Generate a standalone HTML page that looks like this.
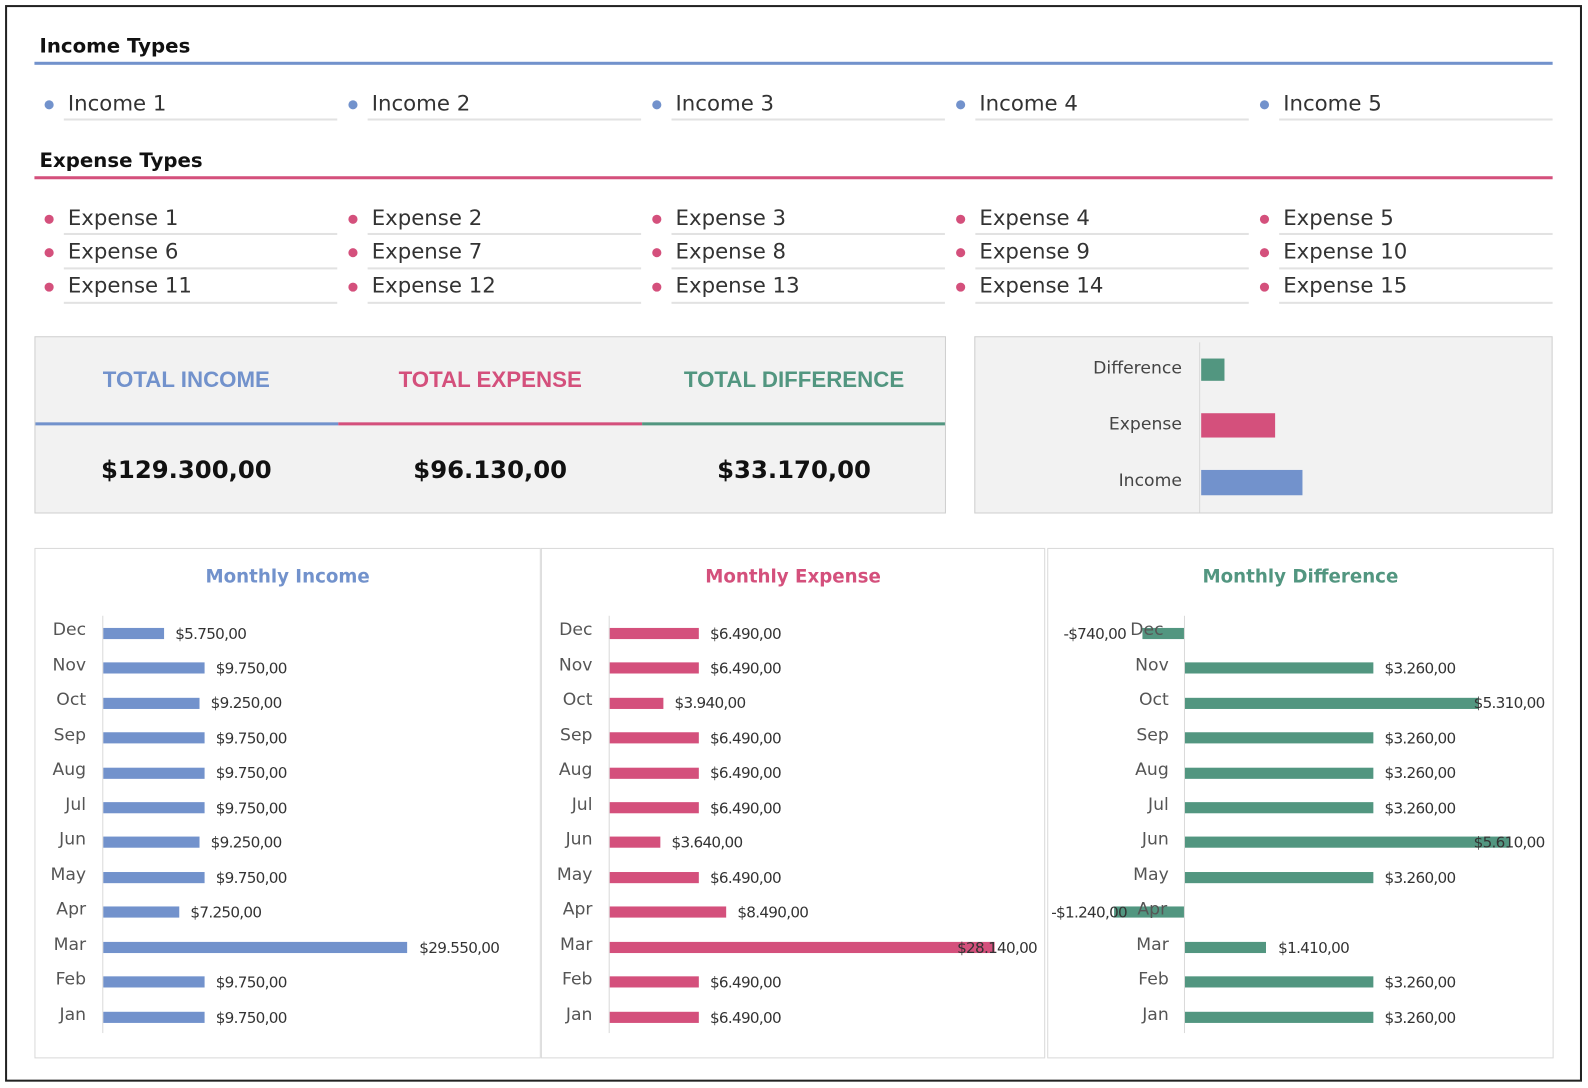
<!DOCTYPE html>
<html><head><meta charset="utf-8"><style>
*{margin:0;padding:0;box-sizing:border-box}
html,body{width:1588px;height:1088px;overflow:hidden;background:#fff}
#w{position:absolute;left:0;top:0;width:1568px;height:1074px;transform:scale(1.0128);transform-origin:0 0;font-family:"DejaVu Sans",sans-serif;color:#333}
.a{position:absolute}
.frame{left:5px;top:5px;width:1557px;height:1063px;border:2px solid #222}
.h{font-weight:bold;font-size:19.5px;color:#111;left:39px;line-height:24px}
.ln{left:34px;width:1499px;height:3px}
.it{font-size:21px;color:#333;line-height:24px;white-space:nowrap}
.ul{height:2px;background:#e2e2e2;width:270px}
.dot{width:9px;height:9px;border-radius:50%}
.bl{background:#7292cc}.pk{background:#d4507c}.gr{background:#529680}
.box{background:#f2f2f2;border:1.5px solid #cfcfcf}
.th{font-family:"Liberation Sans",sans-serif;font-weight:bold;font-size:22px;width:300px;text-align:center;line-height:26px}
.tv{font-weight:bold;font-size:24px;color:#111;width:300px;text-align:center;line-height:30px}
.cl{font-size:17px;color:#444;width:150px;text-align:right;line-height:20px}
.pn{border:1.5px solid #d9d9d9;background:#fff}
.pt{font-weight:bold;font-size:18px;text-align:center;line-height:24px}
.ax{width:1px;background:#d9d9d9}
.m{font-size:17px;color:#555;width:60px;text-align:right;line-height:20px}
.v{font-size:15px;color:#333;letter-spacing:-0.7px;line-height:20px;white-space:nowrap}
.b{height:11px}
</style></head><body><div id="w">
<div class="a frame"></div>

<div class="a h" style="top:34px">Income Types</div>
<div class="a ln bl" style="top:61px"></div>
<div class="a dot bl" style="left:44px;top:99px"></div><div class="a it" style="left:67px;top:90px">Income 1</div><div class="a ul" style="left:63px;top:117px"></div>
<div class="a dot bl" style="left:344px;top:99px"></div><div class="a it" style="left:367px;top:90px">Income 2</div><div class="a ul" style="left:363px;top:117px"></div>
<div class="a dot bl" style="left:644px;top:99px"></div><div class="a it" style="left:667px;top:90px">Income 3</div><div class="a ul" style="left:663px;top:117px"></div>
<div class="a dot bl" style="left:944px;top:99px"></div><div class="a it" style="left:967px;top:90px">Income 4</div><div class="a ul" style="left:963px;top:117px"></div>
<div class="a dot bl" style="left:1244px;top:99px"></div><div class="a it" style="left:1267px;top:90px">Income 5</div><div class="a ul" style="left:1263px;top:117px"></div>

<div class="a h" style="top:147px">Expense Types</div>
<div class="a ln pk" style="top:174px"></div>

<div class="a dot pk" style="left:44px;top:212px"></div><div class="a it" style="left:67px;top:203px">Expense 1</div><div class="a ul" style="left:63px;top:230px"></div>
<div class="a dot pk" style="left:344px;top:212px"></div><div class="a it" style="left:367px;top:203px">Expense 2</div><div class="a ul" style="left:363px;top:230px"></div>
<div class="a dot pk" style="left:644px;top:212px"></div><div class="a it" style="left:667px;top:203px">Expense 3</div><div class="a ul" style="left:663px;top:230px"></div>
<div class="a dot pk" style="left:944px;top:212px"></div><div class="a it" style="left:967px;top:203px">Expense 4</div><div class="a ul" style="left:963px;top:230px"></div>
<div class="a dot pk" style="left:1244px;top:212px"></div><div class="a it" style="left:1267px;top:203px">Expense 5</div><div class="a ul" style="left:1263px;top:230px"></div>

<div class="a dot pk" style="left:44px;top:245px"></div><div class="a it" style="left:67px;top:236px">Expense 6</div><div class="a ul" style="left:63px;top:264px"></div>
<div class="a dot pk" style="left:344px;top:245px"></div><div class="a it" style="left:367px;top:236px">Expense 7</div><div class="a ul" style="left:363px;top:264px"></div>
<div class="a dot pk" style="left:644px;top:245px"></div><div class="a it" style="left:667px;top:236px">Expense 8</div><div class="a ul" style="left:663px;top:264px"></div>
<div class="a dot pk" style="left:944px;top:245px"></div><div class="a it" style="left:967px;top:236px">Expense 9</div><div class="a ul" style="left:963px;top:264px"></div>
<div class="a dot pk" style="left:1244px;top:245px"></div><div class="a it" style="left:1267px;top:236px">Expense 10</div><div class="a ul" style="left:1263px;top:264px"></div>

<div class="a dot pk" style="left:44px;top:279px"></div><div class="a it" style="left:67px;top:270px">Expense 11</div><div class="a ul" style="left:63px;top:298px"></div>
<div class="a dot pk" style="left:344px;top:279px"></div><div class="a it" style="left:367px;top:270px">Expense 12</div><div class="a ul" style="left:363px;top:298px"></div>
<div class="a dot pk" style="left:644px;top:279px"></div><div class="a it" style="left:667px;top:270px">Expense 13</div><div class="a ul" style="left:663px;top:298px"></div>
<div class="a dot pk" style="left:944px;top:279px"></div><div class="a it" style="left:967px;top:270px">Expense 14</div><div class="a ul" style="left:963px;top:298px"></div>
<div class="a dot pk" style="left:1244px;top:279px"></div><div class="a it" style="left:1267px;top:270px">Expense 15</div><div class="a ul" style="left:1263px;top:298px"></div>

<!-- summary -->
<div class="a box" style="left:34px;top:332px;width:900px;height:175px"></div>
<div class="a th" style="left:34px;top:362px;color:#7292cc">TOTAL INCOME</div>
<div class="a th" style="left:334px;top:362px;color:#d4507c">TOTAL EXPENSE</div>
<div class="a th" style="left:634px;top:362px;color:#529680">TOTAL DIFFERENCE</div>
<div class="a bl" style="left:35px;top:417px;width:299px;height:3px"></div>
<div class="a pk" style="left:334px;top:417px;width:300px;height:3px"></div>
<div class="a gr" style="left:634px;top:417px;width:299px;height:3px"></div>
<div class="a tv" style="left:34px;top:449px">$129.300,00</div>
<div class="a tv" style="left:334px;top:449px">$96.130,00</div>
<div class="a tv" style="left:634px;top:449px">$33.170,00</div>

<!-- small chart -->
<div class="a box" style="left:962px;top:332px;width:571px;height:175px"></div>
<div class="a ax" style="left:1184px;top:338px;height:168px"></div>
<div class="a cl" style="left:1017px;top:354px">Difference</div>
<div class="a cl" style="left:1017px;top:409px">Expense</div>
<div class="a cl" style="left:1017px;top:465px">Income</div>
<div class="a gr" style="left:1186px;top:354px;width:23px;height:22px"></div>
<div class="a pk" style="left:1186px;top:408px;width:73px;height:24px"></div>
<div class="a bl" style="left:1186px;top:464px;width:100px;height:25px"></div>

<!-- panels -->
<div class="a pn" style="left:34px;top:541px;width:500px;height:504px"></div>
<div class="a pn" style="left:534px;top:541px;width:498px;height:504px"></div>
<div class="a pn" style="left:1034px;top:541px;width:500px;height:504px"></div>
<div class="a pt" style="left:34px;top:558px;width:500px;color:#7292cc">Monthly Income</div>
<div class="a pt" style="left:534px;top:558px;width:498px;color:#d4507c">Monthly Expense</div>
<div class="a pt" style="left:1034px;top:558px;width:500px;color:#529680">Monthly Difference</div>

<div class="a ax" style="left:101px;top:608px;height:412px"></div>
<div class="a ax" style="left:601px;top:608px;height:412px"></div>
<div class="a ax" style="left:1169px;top:608px;height:412px"></div>

<!-- income panel -->
<div class="a m" style="left:25px;top:612px">Dec</div><div class="a b bl" style="left:102px;top:620px;width:60px"></div><div class="a v" style="left:173px;top:616px">$5.750,00</div>
<div class="a m" style="left:25px;top:647px">Nov</div><div class="a b bl" style="left:102px;top:654px;width:100px"></div><div class="a v" style="left:213px;top:650px">$9.750,00</div>
<div class="a m" style="left:25px;top:681px">Oct</div><div class="a b bl" style="left:102px;top:689px;width:95px"></div><div class="a v" style="left:208px;top:684px">$9.250,00</div>
<div class="a m" style="left:25px;top:716px">Sep</div><div class="a b bl" style="left:102px;top:723px;width:100px"></div><div class="a v" style="left:213px;top:719px">$9.750,00</div>
<div class="a m" style="left:25px;top:750px">Aug</div><div class="a b bl" style="left:102px;top:758px;width:100px"></div><div class="a v" style="left:213px;top:753px">$9.750,00</div>
<div class="a m" style="left:25px;top:785px">Jul</div><div class="a b bl" style="left:102px;top:792px;width:100px"></div><div class="a v" style="left:213px;top:788px">$9.750,00</div>
<div class="a m" style="left:25px;top:819px">Jun</div><div class="a b bl" style="left:102px;top:826px;width:95px"></div><div class="a v" style="left:208px;top:822px">$9.250,00</div>
<div class="a m" style="left:25px;top:854px">May</div><div class="a b bl" style="left:102px;top:861px;width:100px"></div><div class="a v" style="left:213px;top:857px">$9.750,00</div>
<div class="a m" style="left:25px;top:888px">Apr</div><div class="a b bl" style="left:102px;top:895px;width:75px"></div><div class="a v" style="left:188px;top:891px">$7.250,00</div>
<div class="a m" style="left:25px;top:923px">Mar</div><div class="a b bl" style="left:102px;top:930px;width:300px"></div><div class="a v" style="left:414px;top:926px">$29.550,00</div>
<div class="a m" style="left:25px;top:957px">Feb</div><div class="a b bl" style="left:102px;top:964px;width:100px"></div><div class="a v" style="left:213px;top:960px">$9.750,00</div>
<div class="a m" style="left:25px;top:992px">Jan</div><div class="a b bl" style="left:102px;top:999px;width:100px"></div><div class="a v" style="left:213px;top:995px">$9.750,00</div>

<!-- expense panel -->
<div class="a m" style="left:525px;top:612px">Dec</div><div class="a b pk" style="left:602px;top:620px;width:88px"></div><div class="a v" style="left:701px;top:616px">$6.490,00</div>
<div class="a m" style="left:525px;top:647px">Nov</div><div class="a b pk" style="left:602px;top:654px;width:88px"></div><div class="a v" style="left:701px;top:650px">$6.490,00</div>
<div class="a m" style="left:525px;top:681px">Oct</div><div class="a b pk" style="left:602px;top:689px;width:53px"></div><div class="a v" style="left:666px;top:684px">$3.940,00</div>
<div class="a m" style="left:525px;top:716px">Sep</div><div class="a b pk" style="left:602px;top:723px;width:88px"></div><div class="a v" style="left:701px;top:719px">$6.490,00</div>
<div class="a m" style="left:525px;top:750px">Aug</div><div class="a b pk" style="left:602px;top:758px;width:88px"></div><div class="a v" style="left:701px;top:753px">$6.490,00</div>
<div class="a m" style="left:525px;top:785px">Jul</div><div class="a b pk" style="left:602px;top:792px;width:88px"></div><div class="a v" style="left:701px;top:788px">$6.490,00</div>
<div class="a m" style="left:525px;top:819px">Jun</div><div class="a b pk" style="left:602px;top:826px;width:50px"></div><div class="a v" style="left:663px;top:822px">$3.640,00</div>
<div class="a m" style="left:525px;top:854px">May</div><div class="a b pk" style="left:602px;top:861px;width:88px"></div><div class="a v" style="left:701px;top:857px">$6.490,00</div>
<div class="a m" style="left:525px;top:888px">Apr</div><div class="a b pk" style="left:602px;top:895px;width:115px"></div><div class="a v" style="left:728px;top:891px">$8.490,00</div>
<div class="a m" style="left:525px;top:923px">Mar</div><div class="a b pk" style="left:602px;top:930px;width:380px"></div><div class="a v" style="left:945px;top:926px">$28.140,00</div>
<div class="a m" style="left:525px;top:957px">Feb</div><div class="a b pk" style="left:602px;top:964px;width:88px"></div><div class="a v" style="left:701px;top:960px">$6.490,00</div>
<div class="a m" style="left:525px;top:992px">Jan</div><div class="a b pk" style="left:602px;top:999px;width:88px"></div><div class="a v" style="left:701px;top:995px">$6.490,00</div>

<!-- difference panel -->
<div class="a b gr" style="left:1128px;top:620px;width:41px"></div><div class="a v" style="left:1050px;top:616px">-$740,00</div><div class="a" style="left:1116px;top:612px;font-size:17px;color:#555;line-height:20px">Dec</div>
<div class="a m" style="left:1094px;top:647px">Nov</div><div class="a b gr" style="left:1170px;top:654px;width:186px"></div><div class="a v" style="left:1367px;top:650px">$3.260,00</div>
<div class="a m" style="left:1094px;top:681px">Oct</div><div class="a b gr" style="left:1170px;top:689px;width:290px"></div><div class="a v" style="left:1455px;top:684px">$5.310,00</div>
<div class="a m" style="left:1094px;top:716px">Sep</div><div class="a b gr" style="left:1170px;top:723px;width:186px"></div><div class="a v" style="left:1367px;top:719px">$3.260,00</div>
<div class="a m" style="left:1094px;top:750px">Aug</div><div class="a b gr" style="left:1170px;top:758px;width:186px"></div><div class="a v" style="left:1367px;top:753px">$3.260,00</div>
<div class="a m" style="left:1094px;top:785px">Jul</div><div class="a b gr" style="left:1170px;top:792px;width:186px"></div><div class="a v" style="left:1367px;top:788px">$3.260,00</div>
<div class="a m" style="left:1094px;top:819px">Jun</div><div class="a b gr" style="left:1170px;top:826px;width:320px"></div><div class="a v" style="left:1455px;top:822px">$5.610,00</div>
<div class="a m" style="left:1094px;top:854px">May</div><div class="a b gr" style="left:1170px;top:861px;width:186px"></div><div class="a v" style="left:1367px;top:857px">$3.260,00</div>
<div class="a b gr" style="left:1100px;top:895px;width:69px"></div><div class="a v" style="left:1038px;top:891px">-$1.240,00</div><div class="a" style="left:1123px;top:888px;font-size:17px;color:#555;line-height:20px">Apr</div>
<div class="a m" style="left:1094px;top:923px">Mar</div><div class="a b gr" style="left:1170px;top:930px;width:80px"></div><div class="a v" style="left:1262px;top:926px">$1.410,00</div>
<div class="a m" style="left:1094px;top:957px">Feb</div><div class="a b gr" style="left:1170px;top:964px;width:186px"></div><div class="a v" style="left:1367px;top:960px">$3.260,00</div>
<div class="a m" style="left:1094px;top:992px">Jan</div><div class="a b gr" style="left:1170px;top:999px;width:186px"></div><div class="a v" style="left:1367px;top:995px">$3.260,00</div>
</div></body></html>
